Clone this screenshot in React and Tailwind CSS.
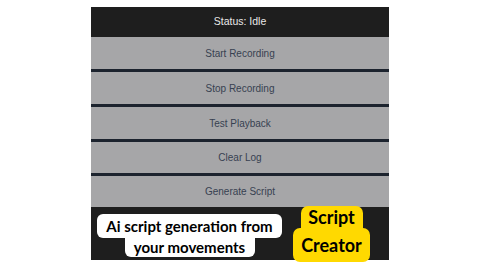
import React from 'react';

const buttons = [
  { label: 'Start Recording', h: 'h-[32px]' },
  { label: 'Stop Recording', h: 'h-[32px]' },
  { label: 'Test Playback', h: 'h-[32px]' },
  { label: 'Clear Log', h: 'h-[31px]' },
  { label: 'Generate Script', h: 'h-[31px]' },
];

function App() {
  return (
    <div className="w-[480px] h-[270px] bg-white pt-[7px] pl-[91px]">
      <div className="w-[298px] flex flex-col" style={{ fontFamily: '"Liberation Sans", Arial, sans-serif' }}>
        <div className="h-[30px] bg-[#1e1e1e] flex items-center justify-center text-[10.5px] text-[#e8e8e8]">
          Status: Idle
        </div>
        <div className="flex flex-col gap-[3px] bg-[#1c232e]">
          {buttons.map((b) => (
            <button
              key={b.label}
              className={`${b.h} w-full bg-[#a6a6a8] text-[#374151] text-[10px] flex items-center justify-center`}
            >
              {b.label}
            </button>
          ))}
        </div>
        <div className="h-[53px] bg-[#1e1e1e] flex items-start pl-[6px] pr-[19px] font-bold" style={{ fontFamily: 'Lato, "Open Sans", sans-serif' }}>
          <div className="flex flex-col items-center mt-[7px] text-black text-[15px] leading-[20px]">
            <div className="bg-white rounded-[6px] w-[185px] h-[24px] flex items-center justify-center">
              Ai script generation from
            </div>
            <div className="bg-white rounded-b-[6px] w-[130px] h-[20px] flex items-start justify-center -mt-[1px]">
              your movements
            </div>
          </div>
          <div className="ml-auto flex flex-col items-center -mt-[1px] text-black text-[18px] leading-[22px]">
            <div className="bg-[#ffd900] rounded-t-[7px] w-[62px] h-[22px] flex items-end justify-center pt-[2px]">
              Script
            </div>
            <div className="bg-[#ffd900] rounded-[7px] w-[77px] h-[34px] flex items-center justify-center">
              Creator
            </div>
          </div>
        </div>
      </div>
    </div>
  );
}

export default App;
